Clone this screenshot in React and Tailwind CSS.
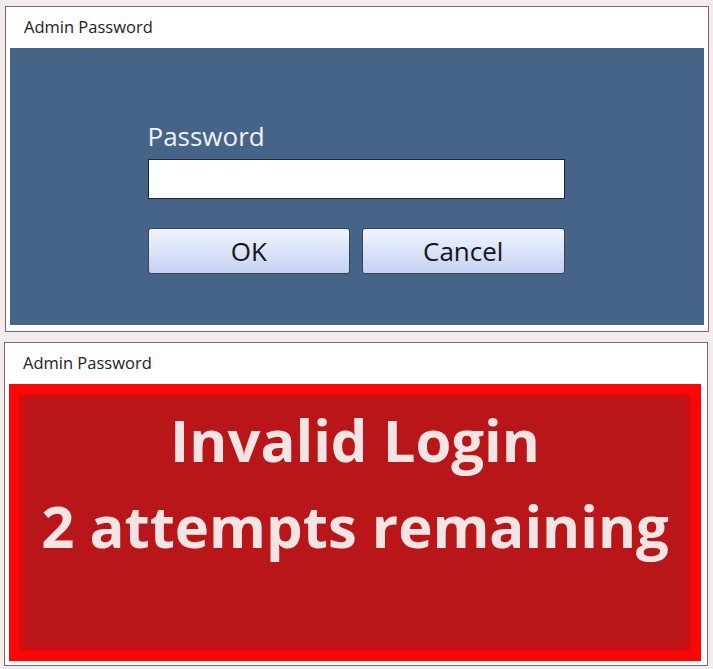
import React from 'react';

const ui = { fontFamily: '"Open Sans", "Noto Sans", sans-serif' };

function Window({ title, className = '', children }) {
  return (
    <div className={`border border-[#8d5f68] bg-white flex flex-col ${className}`}>
      <div className="h-[41px] flex items-center pl-[18px] text-[16.5px] text-[#222]">{title}</div>
      {children}
    </div>
  );
}

function DialogButton({ children }) {
  return (
    <button className="flex-1 h-[46px] rounded-[3px] border border-[#3b4253] bg-gradient-to-b from-[#f1f4fd] to-[#c4d3f3] text-[26px] text-[#151515]">
      {children}
    </button>
  );
}

export default function App() {
  return (
    <div className="w-[713px] h-[669px] bg-[#f3ecec] pt-[6px] flex flex-col gap-[10px]" style={ui}>
      <Window title="Admin Password" className="ml-[5px] w-[704px] h-[326px]">
        <div className="mx-[4px] h-[277px] bg-[#466388] flex justify-center pt-[72px] pr-[2px]">
          <div className="w-[417px] flex flex-col">
            <label className="text-[26px] leading-[32px] text-[#eef2f7]">Password</label>
            <input type="password" className="mt-[7px] h-[40px] bg-white border border-[#1c2533] outline-none" />
            <div className="mt-[29px] flex gap-[12px]">
              <DialogButton>OK</DialogButton>
              <DialogButton>Cancel</DialogButton>
            </div>
          </div>
        </div>
      </Window>

      <Window title="Admin Password" className="ml-[4px] w-[704px] h-[324px]">
        <div className="ml-[4px] mr-[6px] h-[277px] border-[10px] border-[#ff0606] bg-[#b9161a] shadow-[inset_0_0_6px_3px_#e00b0f] flex flex-col items-center pt-[3px] text-[#f4e4e4] font-bold text-[58px] leading-[86px]">
          <div>Invalid Login</div>
          <div>2 attempts remaining</div>
        </div>
      </Window>
    </div>
  );
}
